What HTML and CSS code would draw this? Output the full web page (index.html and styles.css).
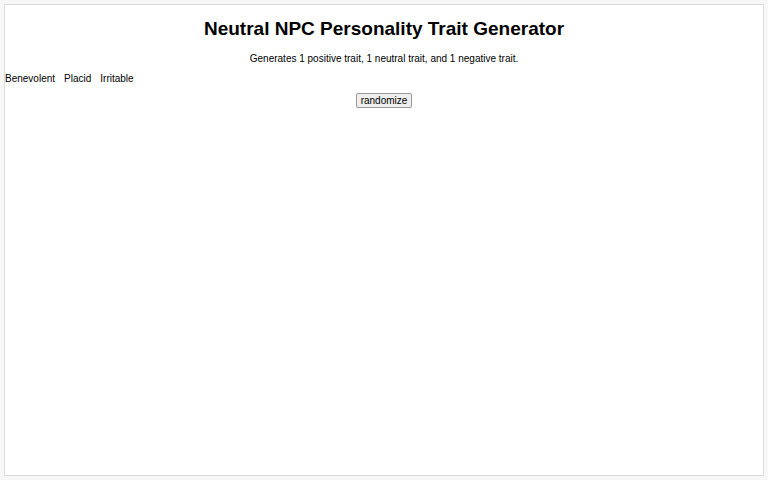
FILE: index.html
```
<!DOCTYPE html>
<html lang="en">
<head>
    <meta charset="utf-8">
    <title>Neutral NPC Personality Trait Generator</title>
    <link rel="stylesheet" href="styles.css">
</head>
<body>
    <main class="page">
        <h1 class="title">Neutral NPC Personality Trait Generator</h1>
        <p class="subtitle">Generates 1 positive trait, 1 neutral trait, and 1 negative trait.</p>
        <div class="traits">
            <span id="positive">Benevolent</span>
            <span id="neutral">Placid</span>
            <span id="negative">Irritable</span>
        </div>
        <button class="randomize" type="button" onclick="randomize()">randomize</button>
    </main>
    <script>
        var traits = {
            positive: ["Benevolent", "Honest", "Loyal", "Patient"],
            neutral: ["Placid", "Quiet", "Formal", "Private"],
            negative: ["Irritable", "Greedy", "Vain", "Rude"]
        };

        function randomize() {
            for (var kind in traits) {
                var list = traits[kind];
                document.getElementById(kind).textContent = list[Math.floor(Math.random() * list.length)];
            }
        }
    </script>
</body>
</html>
```
FILE: styles.css
```
* {
    box-sizing: border-box;
}
body {
    margin: 0;
    padding: 4px;
    min-height: 100vh;
    display: flex;
    background-color: #f7f7f7;
    font-family: "Liberation Sans", Arial, sans-serif;
    font-size: 10px;
    color: #000;
}
.page {
    flex: 1;
    display: flex;
    flex-direction: column;
    align-items: center;
    background-color: #fff;
    border: 1px solid #ddd;
}
.title {
    margin: 12px 0;
    font-size: 19px;
    line-height: 24px;
}
.subtitle {
    margin: 0;
    line-height: 12px;
}
.traits {
    align-self: stretch;
    display: flex;
    gap: 9px;
    margin: 8px 0;
    line-height: 12px;
}
.randomize {
    padding: 0 4px;
    border: 1px solid #999;
    border-radius: 2px;
    background-color: #efefef;
    color: #000;
    font-family: inherit;
    font-size: 10px;
    line-height: 13px;
}
```
